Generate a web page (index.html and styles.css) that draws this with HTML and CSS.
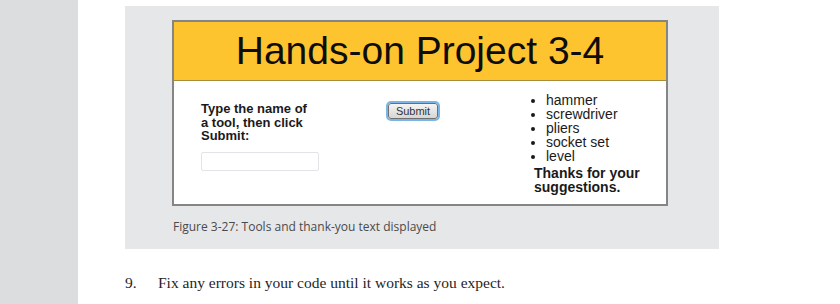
FILE: index.html
```html
<!DOCTYPE html>
<html>
<head>
  <title>Hands-on Project 3-4</title>
  <meta name="viewport" content="width=device-width, initial-scale=1.0">
  <link rel="stylesheet" href="styles.css">
</head>
<body>
  <div class="page">
    <div class="gutter"></div>
    <div class="main">
      <div class="figure">
        <div class="project">
          <h1>Hands-on Project 3-4</h1>
          <div class="project-body">
            <div class="ask">
              <label for="tool">Type the name of a tool, then click Submit:</label>
              <input type="text" id="tool">
            </div>
            <div class="send">
              <button id="submit">Submit</button>
            </div>
            <div class="tools">
              <ul>
                <li>hammer</li>
                <li>screwdriver</li>
                <li>pliers</li>
                <li>socket set</li>
                <li>level</li>
              </ul>
              <p class="thanks">Thanks for your suggestions.</p>
            </div>
          </div>
        </div>
        <p class="caption">Figure 3-27: Tools and thank-you text displayed</p>
      </div>
      <p class="step"><span class="num">9.</span>Fix any errors in your code until it works as you expect.</p>
    </div>
  </div>
</body>
</html>
```

FILE: styles.css
```css
body {
  margin: 0;
  padding: 0;
  background-color: #ffffff;
  font-family: "Liberation Sans", Arial, sans-serif;
}

.page {
  display: flex;
  height: 304px;
}

.gutter {
  width: 78px;
  background-color: #dcdddf;
}

.main {
  padding-left: 47px;
  padding-top: 6px;
}

.figure {
  width: 594px;
  height: 243px;
  background-color: #e6e7e9;
  padding: 14px 0 0 47px;
  box-sizing: border-box;
}

.project {
  width: 496px;
  height: 186px;
  box-sizing: border-box;
  border: 2px solid #858585;
  background-color: #ffffff;
  display: flex;
  flex-direction: column;
}

h1 {
  margin: 0;
  height: 58px;
  background-color: #fdc42f;
  border-bottom: 1px solid #a88c3e;
  font-size: 39px;
  font-weight: normal;
  color: #0d0d0d;
  text-align: center;
  line-height: 57px;
}

.project-body {
  display: flex;
  padding-left: 27px;
  color: #1a1a1a;
}

.ask {
  width: 187px;
  padding-top: 21px;
}

.ask label {
  display: block;
  width: 112px;
  font-size: 13px;
  font-weight: bold;
  line-height: 13.5px;
}

.ask input {
  display: block;
  margin-top: 9px;
  width: 118px;
  height: 19px;
  box-sizing: border-box;
  border: 1px solid #e2e4e8;
  border-radius: 2px;
  background: #ffffff;
}

.send {
  width: 146px;
  padding-top: 20px;
}

#submit {
  width: 50px;
  height: 16px;
  padding: 0;
  font-family: "Liberation Sans", Arial, sans-serif;
  font-size: 11px;
  color: #333333;
  background: linear-gradient(#f4f4f4, #d6d6d6);
  border: 1px solid #6f6f6f;
  border-radius: 3px;
  box-shadow: 0 0 0 2px #7db4e6;
}

.tools {
  padding-top: 12px;
}

.tools ul {
  margin: 0;
  padding-left: 12px;
  font-size: 14px;
  line-height: 14px;
}

.thanks {
  margin: 4px 0 0 0;
  width: 110px;
  font-size: 14px;
  font-weight: bold;
  line-height: 13.5px;
}

.caption {
  margin: 12px 0 0 1px;
  font-family: "Open Sans", sans-serif;
  font-size: 12px;
  color: #4a4a4a;
}

.step {
  margin: 25px 0 0 0;
  font-family: "Liberation Serif", "Times New Roman", serif;
  font-size: 15.5px;
  color: #1f1f1f;
}

.num {
  display: inline-block;
  width: 33px;
}
```
